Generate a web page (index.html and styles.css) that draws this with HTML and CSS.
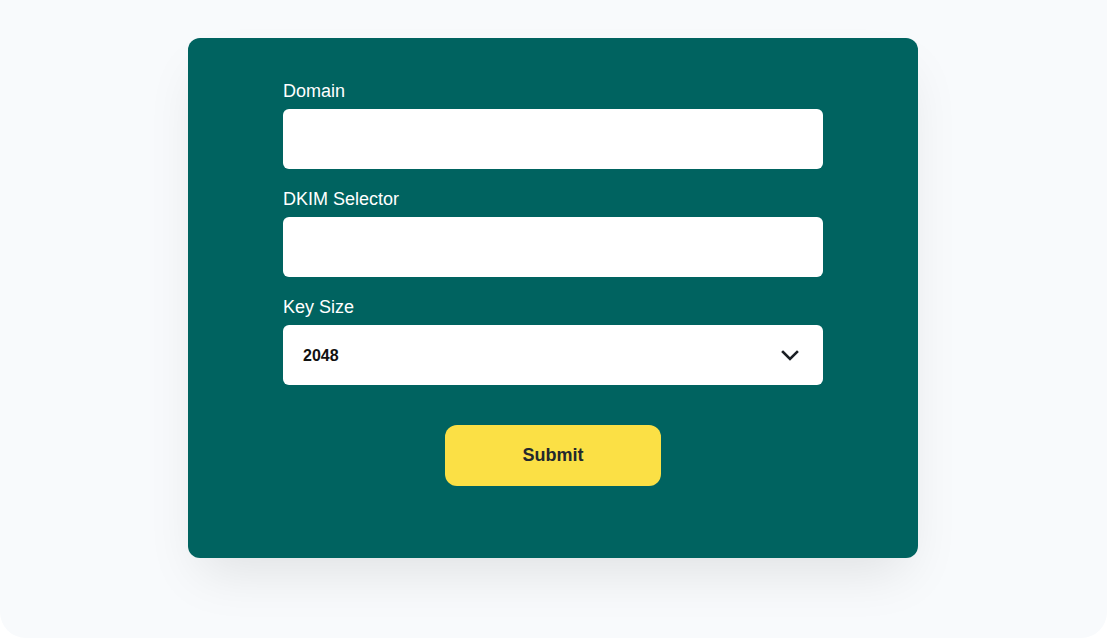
FILE: index.html
```html
<!DOCTYPE html>
<html>
<head>
<meta charset="utf-8">
<link rel="stylesheet" href="styles.css">
</head>
<body>
<div class="page">
  <form class="card">
    <div class="field">
      <label class="label">Domain</label>
      <div class="input"></div>
    </div>
    <div class="field">
      <label class="label">DKIM Selector</label>
      <div class="input"></div>
    </div>
    <div class="field">
      <label class="label">Key Size</label>
      <div class="input select">
        <span class="value">2048</span>
        <svg class="chev" width="18" height="11" viewBox="0 0 18 11"><path d="M2 2 L9 9 L16 2" fill="none" stroke="#1b1f24" stroke-width="2.6" stroke-linecap="square"/></svg>
      </div>
    </div>
    <div class="actions">
      <div class="btn">Submit</div>
    </div>
  </form>
</div>
</body>
</html>
```
FILE: styles.css
```css
html, body {
  margin: 0;
  padding: 0;
  background: #ffffff;
  font-family: "Liberation Sans", Arial, sans-serif;
}
.page {
  height: 638px;
  box-sizing: border-box;
  background: #f8fafc;
  border-radius: 0 0 26px 26px;
  padding-top: 38px;
  padding-right: 1px;
  display: flex;
  justify-content: center;
  align-items: flex-start;
}
.card {
  width: 730px;
  height: 520px;
  box-sizing: border-box;
  background: #006360;
  border-radius: 12px;
  padding: 43px 95px 0;
  box-shadow: 0 25px 50px -12px rgba(0, 0, 0, 0.10);
  display: flex;
  flex-direction: column;
}
.field {
  display: flex;
  flex-direction: column;
  margin-bottom: 20px;
}
.label {
  color: #ffffff;
  font-size: 18px;
  line-height: 20px;
  height: 20px;
  margin-bottom: 8px;
}
.input {
  height: 60px;
  background: #ffffff;
  border-radius: 6px;
}
.select {
  display: flex;
  align-items: center;
  justify-content: space-between;
  padding: 0 24px 0 20px;
}
.value {
  font-size: 16px;
  font-weight: bold;
  color: #111111;
  margin-top: 2px;
}
.chev {
  display: block;
  margin-top: 1px;
}
.actions {
  display: flex;
  justify-content: center;
  margin-top: 20px;
}
.btn {
  width: 216px;
  height: 61px;
  background: #fbe045;
  border-radius: 12px;
  color: #23282d;
  font-weight: bold;
  font-size: 18px;
  display: flex;
  align-items: center;
  justify-content: center;
}
```
